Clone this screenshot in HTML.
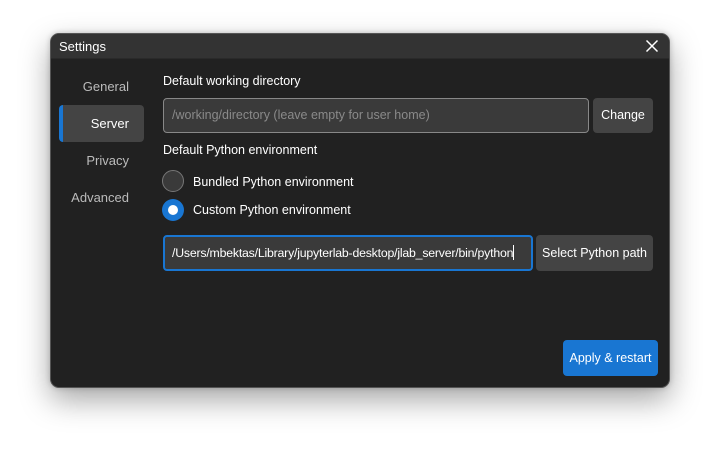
<!DOCTYPE html>
<html><head><meta charset="utf-8"><style>
*{box-sizing:border-box;margin:0;padding:0}
html,body{width:720px;height:454px;background:#fff;overflow:hidden;font-family:"Liberation Sans",Arial,sans-serif}
.win{position:absolute;left:50px;top:33px;width:620px;height:355px;background:#212121;border-radius:9px;border:1px solid #555;box-shadow:0 12px 30px rgba(0,0,0,.35),0 0 6px rgba(0,0,0,.2);overflow:hidden}
.title{position:absolute;left:0;top:0;width:100%;height:25px;background:#333;color:#fff;font-size:13px;line-height:25px;padding-left:8px;border-bottom:1px solid #2a2a2a}
.close{position:absolute;right:10px;top:5px;width:14px;height:14px}
.nav{position:absolute;left:8px;width:85px;height:37px;color:#bbb;font-size:13px;text-align:right;padding-right:15px;line-height:37px;border-radius:4px}
.nav.act{background:#444;color:#fff;border-left:4px solid #1976d2}
.lbl{position:absolute;left:112px;color:#fff;font-size:12.5px;white-space:nowrap}
.inp{position:absolute;background:#3a3a3a;border-radius:4px;font-size:12.5px;padding-left:8px;white-space:nowrap;overflow:hidden}
.btn{position:absolute;background:#444;color:#fff;font-size:12.5px;text-align:center;border-radius:4px;white-space:nowrap}
.radio{position:absolute;left:111px;width:22px;height:22px;border-radius:50%}
</style></head><body>
<div class="win">
<div class="title">Settings
<svg class="close" viewBox="0 0 14 14"><path d="M1.5 1.5L12.5 12.5M12.5 1.5L1.5 12.5" stroke="#fff" stroke-width="1.5"/></svg></div>
<div class="nav" style="top:34px">General</div>
<div class="nav act" style="top:71px">Server</div>
<div class="nav" style="top:108px">Privacy</div>
<div class="nav" style="top:145px">Advanced</div>
<div class="lbl" style="top:40px">Default working directory</div>
<div class="inp" style="left:112px;top:64px;width:426px;height:35px;border:1px solid #888;color:#8a8a8a;line-height:33px">/working/directory (leave empty for user home)</div>
<div class="btn" style="left:542px;top:64px;width:60px;height:35px;line-height:35px">Change</div>
<div class="lbl" style="top:109px">Default Python environment</div>
<div class="radio" style="top:136px;background:#3a3a3a;border:1px solid #777"></div>
<div class="lbl" style="left:142px;top:141px">Bundled Python environment</div>
<div class="radio" style="top:165px;background:#1976d2"><div style="position:absolute;left:6px;top:6px;width:10px;height:10px;border-radius:50%;background:#fff"></div></div>
<div class="lbl" style="left:142px;top:169px">Custom Python environment</div>
<div class="inp" style="left:112px;top:201px;width:370px;height:36px;border:2px solid #1976d2;color:#fff;line-height:32px;padding-left:7px;font-size:12.3px;letter-spacing:-0.2px">/Users/mbektas/Library/jupyterlab-desktop/jlab_server/bin/python<span style="display:inline-block;width:1px;height:15px;background:#fff;vertical-align:-3px"></span></div>
<div class="btn" style="left:485px;top:201px;width:117px;height:36px;line-height:36px">Select Python path</div>
<div class="btn" style="left:512px;top:306px;width:95px;height:36px;line-height:36px;background:#1976d2">Apply &amp; restart</div>
</div>
</body></html>
